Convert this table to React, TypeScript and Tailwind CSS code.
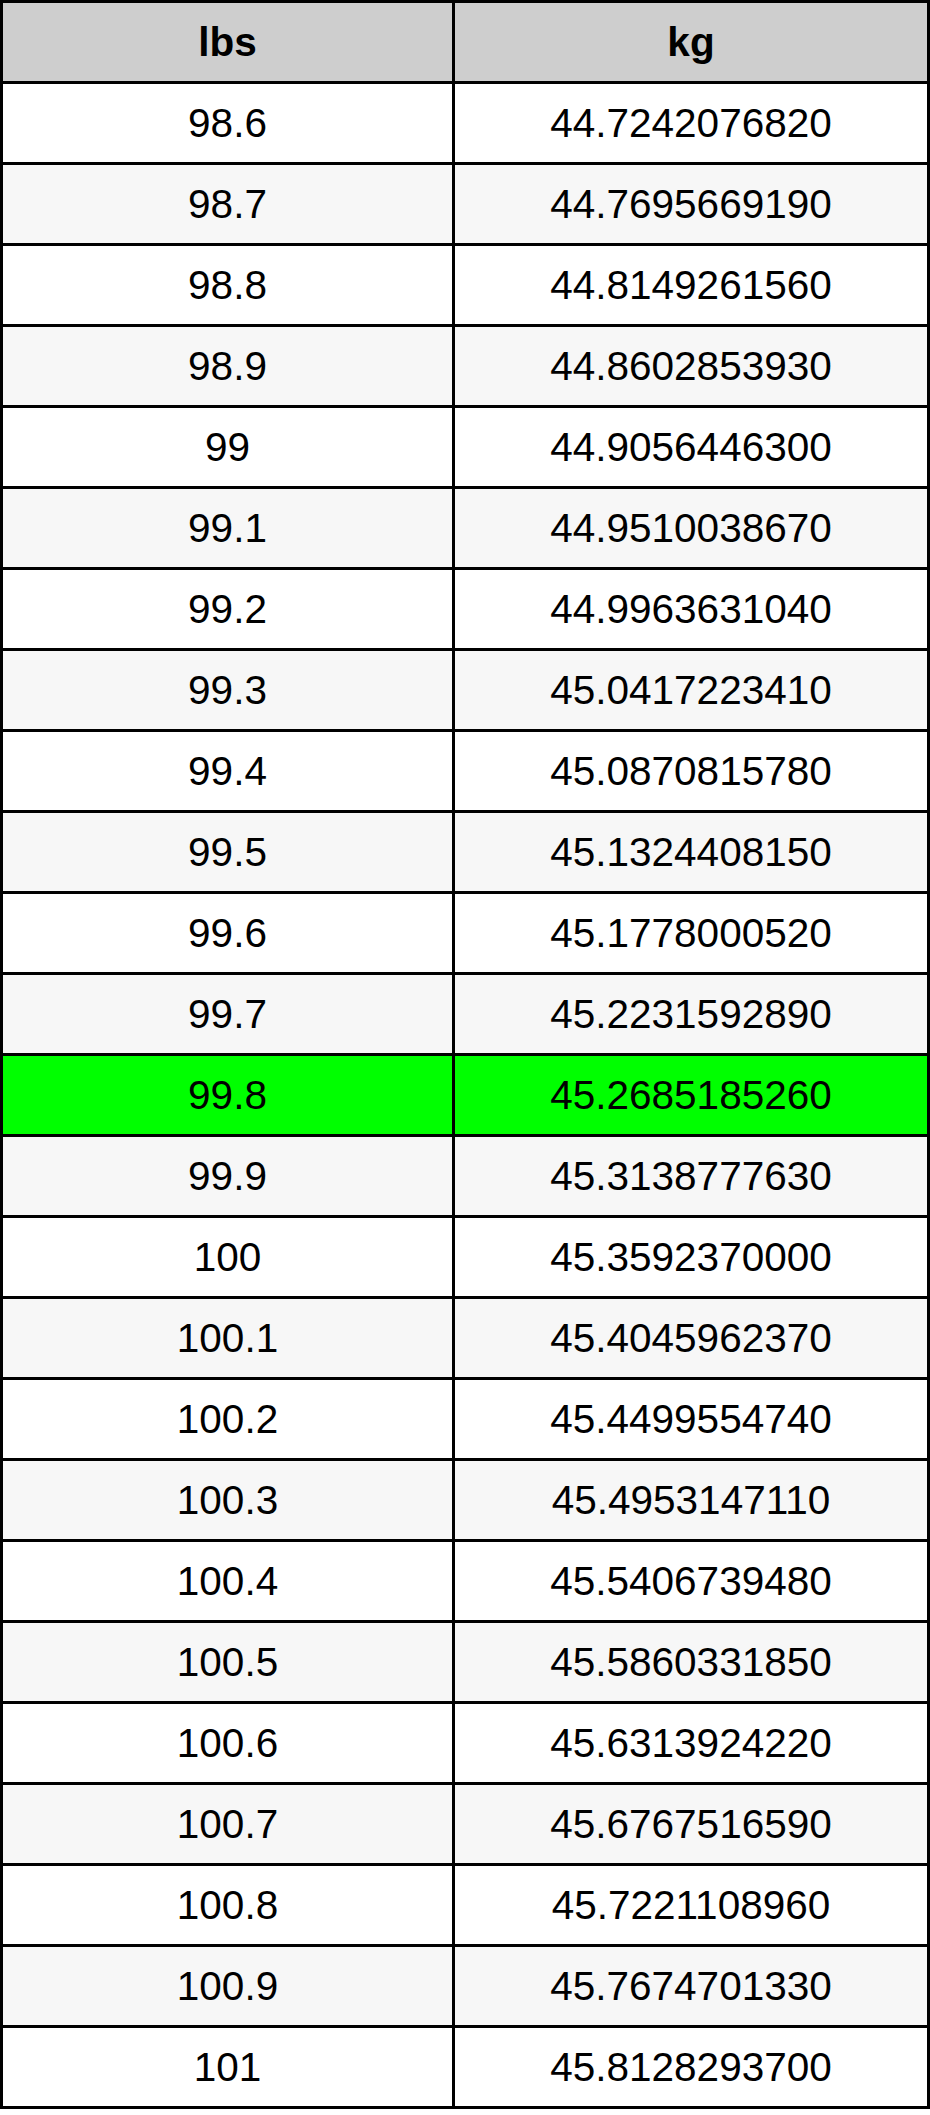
import React from "react";

const rows: [string, string][] = [
  ["98.6", "44.7242076820"],
  ["98.7", "44.7695669190"],
  ["98.8", "44.8149261560"],
  ["98.9", "44.8602853930"],
  ["99", "44.9056446300"],
  ["99.1", "44.9510038670"],
  ["99.2", "44.9963631040"],
  ["99.3", "45.0417223410"],
  ["99.4", "45.0870815780"],
  ["99.5", "45.1324408150"],
  ["99.6", "45.1778000520"],
  ["99.7", "45.2231592890"],
  ["99.8", "45.2685185260"],
  ["99.9", "45.3138777630"],
  ["100", "45.3592370000"],
  ["100.1", "45.4045962370"],
  ["100.2", "45.4499554740"],
  ["100.3", "45.4953147110"],
  ["100.4", "45.5406739480"],
  ["100.5", "45.5860331850"],
  ["100.6", "45.6313924220"],
  ["100.7", "45.6767516590"],
  ["100.8", "45.7221108960"],
  ["100.9", "45.7674701330"],
  ["101", "45.8128293700"],
];

export default function App() {
  return (
    <div className="w-[930px] h-[2115px] bg-white" style={{ fontFamily: '"Liberation Sans", Arial, sans-serif' }}>
      <div className="grid grid-cols-[449px_472px] gap-[3px] bg-black p-[3px] w-[930px] text-[40.5px] text-black leading-none">
        <div className="h-[78px] bg-[#cecece] flex items-center justify-center font-bold">lbs</div>
        <div className="h-[78px] bg-[#cecece] flex items-center justify-center font-bold">kg</div>
        {rows.map(([a, b], i) => {
          const bg = a === "99.8" ? "bg-[#00ff00]" : i % 2 === 0 ? "bg-white" : "bg-[#f7f7f7]";
          return (
            <React.Fragment key={a}>
              <div className={`h-[78px] ${bg} flex items-center justify-center`}>{a}</div>
              <div className={`h-[78px] ${bg} flex items-center justify-center`}>{b}</div>
            </React.Fragment>
          );
        })}
      </div>
    </div>
  );
}
